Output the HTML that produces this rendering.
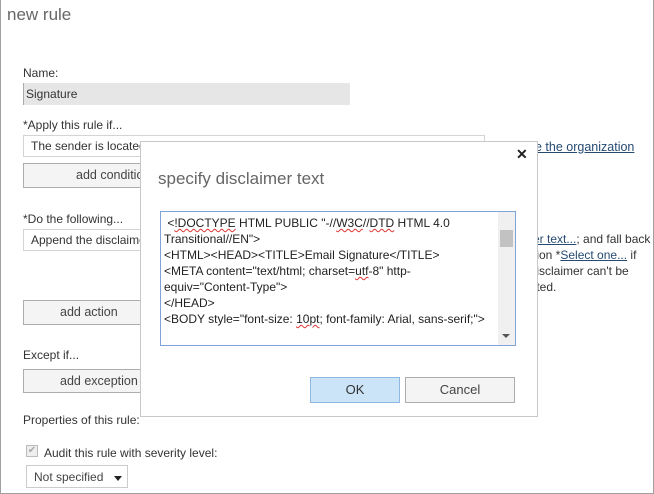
<!DOCTYPE html>
<html><head><style>
*{margin:0;padding:0;box-sizing:border-box}
body{width:654px;height:494px;background:#fff;font-family:"Liberation Sans",sans-serif;font-size:12px;color:#333;position:relative;overflow:hidden}
.a{position:absolute;white-space:nowrap}
.frame{position:absolute;left:0;top:0;width:654px;height:494px;border:1px solid #a0a0a0;border-top:none}
.btn{position:absolute;background:#f4f4f4;border:1px solid #adadad;text-align:center;color:#444;font-size:13px}
.sel{position:absolute;background:#fff;border:1px solid #d4d4d4;color:#333;font-size:12px;padding-left:7px}
.ta div{height:16px;line-height:16px}
.sq{text-decoration:underline wavy #d33;text-decoration-thickness:1px}
.lk{color:#264a72;text-decoration:underline}
</style></head><body>
<div class="frame"></div>
<div class="a" style="left:7px;top:5px;font-size:17px;color:#666">new rule</div>
<div class="a" style="left:23px;top:66px">Name:</div>
<div class="a" style="left:23px;top:83px;width:327px;height:22px;background:#e6e6e6;border-left:1px solid #aaa;padding:4px 2px;font-size:12px">Signature</div>
<div class="a" style="left:23px;top:118px">*Apply this rule if...</div>
<div class="sel" style="left:23px;top:135px;width:462px;height:22px;line-height:20px">The sender is located...</div>
<div class="btn" style="left:23px;top:163px;width:140px;height:25px;line-height:23px;padding-left:52px;text-align:left;font-size:12.5px">add condition</div>
<div class="a lk" style="left:535px;top:140px;font-size:12.5px">e the organization</div>
<div class="a" style="left:23px;top:212px">*Do the following...</div>
<div class="sel" style="left:23px;top:229px;width:462px;height:22px;line-height:20px">Append the disclaimer...</div>
<div class="a" style="left:533px;top:231px;line-height:16px"><span class="lk">er text...</span>; and fall back<br>tion *<span class="lk">Select one...</span> if<br>&nbsp;isclaimer can't be<br>&nbsp;ted.</div>
<div class="btn" style="left:23px;top:300px;width:140px;height:25px;line-height:23px;padding-left:36px;text-align:left;font-size:12.5px">add action</div>
<div class="a" style="left:23px;top:348px">Except if...</div>
<div class="btn" style="left:23px;top:369px;width:140px;height:24px;line-height:22px;padding-left:36px;text-align:left;font-size:12.5px">add exception</div>
<div class="a" style="left:23px;top:413px">Properties of this rule:</div>
<div class="a" style="left:26px;top:445px;width:12px;height:12px;border:1px solid #bbb;background:#eee;color:#aaa;font-size:10px;line-height:10px;text-align:center">✔</div>
<div class="a" style="left:44px;top:446px">Audit this rule with severity level:</div>
<div class="a" style="left:26px;top:465px;width:102px;height:23px;border:1px solid #ccc;padding:4px 7px;color:#444">Not specified<span style="position:absolute;right:5px;top:10px;border:4px solid transparent;border-top:5px solid #222;border-bottom:0"></span></div>

<div class="a" style="left:140px;top:141px;width:398px;height:276px;background:#fff;border:1px solid #c8c8c8"></div>
<div class="a" style="left:516px;top:146px;font-size:14px;font-weight:bold;color:#222">✕</div>
<div class="a" style="left:158px;top:169px;font-size:17px;color:#666">specify disclaimer text</div>
<div class="a ta" style="left:160px;top:211px;width:356px;height:135px;border:1px solid #7ea3d9;padding:3px 0 0 3px;font-size:12px;color:#222">
<div>&nbsp;&lt;<span class="sq">!DOCTYPE</span> HTML PUBLIC "-//<span class="sq">W3C</span>//<span class="sq">DTD</span> HTML 4.0</div>
<div>Transitional//EN"&gt;</div>
<div>&lt;HTML&gt;&lt;HEAD&gt;&lt;TITLE&gt;Email Signature&lt;/TITLE&gt;</div>
<div>&lt;META content="text/html; charset=<span class="sq">utf</span>-8" http-</div>
<div>equiv="Content-Type"&gt;</div>
<div>&lt;/HEAD&gt;</div>
<div>&lt;BODY style="font-size: <span class="sq">10pt</span>; font-family: Arial, sans-serif;"&gt;</div>
<div class="a" style="left:337px;top:0;width:17px;height:133px;background:#f0f0f0"></div>
<div class="a" style="left:341px;top:6px;border:4px solid transparent;border-bottom:4px solid #999;border-top:0"></div>
<div class="a" style="left:339px;top:18px;width:13px;height:17px;background:#c2c2c2"></div>
<div class="a" style="left:341px;top:122px;border:4px solid transparent;border-top:4px solid #555;border-bottom:0"></div>
</div>
<div class="a" style="left:310px;top:377px;width:90px;height:26px;background:#cce4f7;border:1px solid #8fb8de;text-align:center;line-height:24px;font-size:13px;color:#333">OK</div>
<div class="a" style="left:405px;top:377px;width:110px;height:26px;background:#f4f4f4;border:1px solid #adadad;text-align:center;line-height:24px;font-size:13px;color:#444">Cancel</div>
</body></html>
